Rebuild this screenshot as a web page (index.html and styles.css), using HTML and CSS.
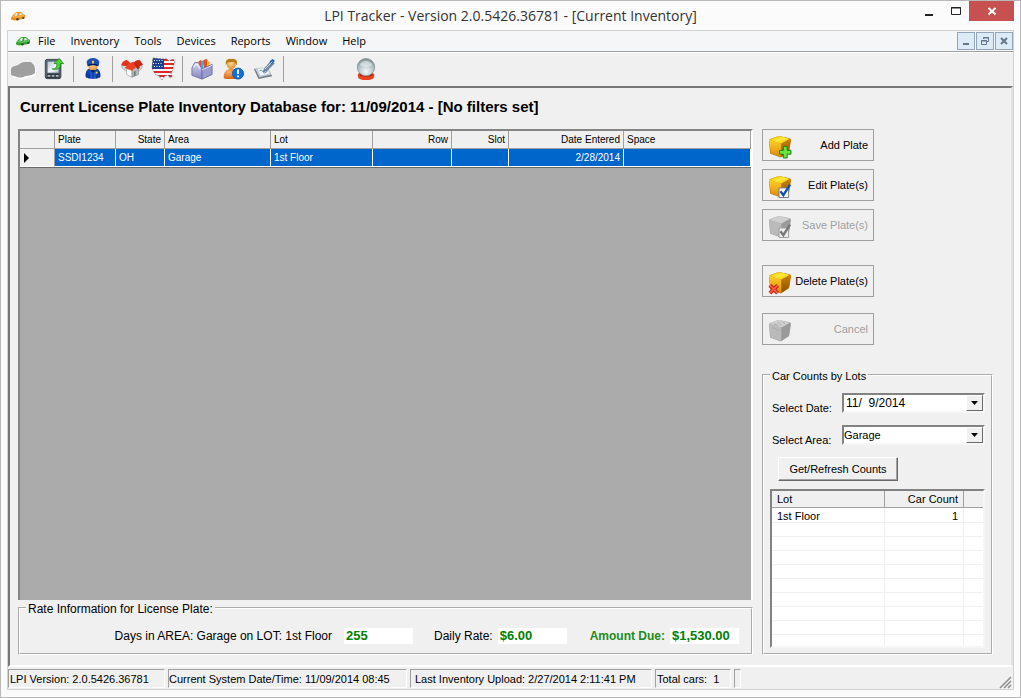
FILE: index.html
```html
<!DOCTYPE html>
<html lang="en">
<head>
<meta charset="utf-8">
<title>LPI Tracker</title>
<link rel="stylesheet" href="styles.css">
</head>
<body>
<svg class="defs" aria-hidden="true">
  <defs>
    <linearGradient id="goldTop" x1="0" y1="0" x2="1" y2="1"><stop offset="0" stop-color="#e8b400"/><stop offset=".5" stop-color="#ffe93a"/><stop offset="1" stop-color="#f0b800"/></linearGradient>
    <linearGradient id="goldLeft" x1="0" y1="0" x2="0" y2="1"><stop offset="0" stop-color="#ffd02a"/><stop offset="1" stop-color="#dd8a0a"/></linearGradient>
    <linearGradient id="goldRight" x1="0" y1="0" x2="0" y2="1"><stop offset="0" stop-color="#c98400"/><stop offset="1" stop-color="#8a4e00"/></linearGradient>
    <linearGradient id="navy" x1="0" y1="0" x2="1" y2="0"><stop offset="0" stop-color="#0a2f94"/><stop offset=".5" stop-color="#1f66dc"/><stop offset="1" stop-color="#0b2c8c"/></linearGradient>
    <linearGradient id="lilac" x1="0" y1="0" x2="0" y2="1"><stop offset="0" stop-color="#d4d6f2"/><stop offset="1" stop-color="#8484bc"/></linearGradient>
    <linearGradient id="screen" x1="0" y1="0" x2="1" y2="1"><stop offset="0" stop-color="#b8c8d8"/><stop offset=".6" stop-color="#f2f7fb"/><stop offset="1" stop-color="#a9bccc"/></linearGradient>
    <radialGradient id="skin" cx=".45" cy=".35" r=".7"><stop offset="0" stop-color="#ffd694"/><stop offset="1" stop-color="#dc8c2a"/></radialGradient>
    <radialGradient id="orange" cx=".35" cy=".3" r=".8"><stop offset="0" stop-color="#ffb368"/><stop offset="1" stop-color="#c8560a"/></radialGradient>
    <radialGradient id="glass" cx=".5" cy=".75" r=".75"><stop offset="0" stop-color="#f4f7f7"/><stop offset=".6" stop-color="#b4c2c4"/><stop offset="1" stop-color="#768688"/></radialGradient>
    <clipPath id="states"><path d="M2 1l9 1h5l2 2 4-2 2 3-2 4v4l-2 3 1 4-2 1-2-3-3 1-3 4-3-4-4-2-3-6z"/></clipPath>
    <symbol id="cube" viewBox="0 0 24 24">
      <path d="M1 6q0-2 2-2l8-3 11 2q2 0 2 3l-2 12-8 5q-1 1-2 0l-8-3q-2 0-2-3z" fill="#b87805"/>
      <path d="M1 5l10-4 12 3-9 5z" fill="url(#goldTop)"/>
      <path d="M1 5l13 4v14L3 19z" fill="url(#goldLeft)"/>
      <path d="M14 9l9-5-1 13-8 6z" fill="url(#goldRight)"/>
    </symbol>
    <symbol id="cube-off" viewBox="0 0 24 24">
      <path d="M1 6q0-2 2-2l8-3 11 2q2 0 2 3l-2 12-8 5q-1 1-2 0l-8-3q-2 0-2-3z" fill="#a4a4a4"/>
      <path d="M1 5l10-4 12 3-9 5z" fill="#cfcfcf"/>
      <path d="M1 5l13 4v14L3 19z" fill="#bababa"/>
      <path d="M14 9l9-5-1 13-8 6z" fill="#9a9a9a"/>
    </symbol>
    <symbol id="car" viewBox="0 0 16 10">
      <path d="M1 7l1-2 3-3q1-1 3-1h3l2 2 2 1v3l-2 1-5 1-4 .5-3-1z" fill="currentColor"/>
      <path d="M4 4.500l2-2.500h2L7 5zM9 4.500l.5-2.500H11l1.500 2z" fill="#dfe8e4"/>
      <path d="M2.500 5.500L7 6.200l7-1.700" fill="none" stroke="#fff" stroke-opacity=".45" stroke-width=".8"/>
      <circle cx="7.500" cy="8.200" r="1.300" fill="#444"/><circle cx="13.200" cy="7" r="1.100" fill="#444"/>
    </symbol>
  </defs>
</svg>

<div class="window">
  <header class="titlebar">
    <svg class="app-icon orange-car" viewBox="0 0 16 10"><use href="#car"/></svg>
    <h1 class="window-title">LPI Tracker - Version 2.0.5426.36781 - [Current Inventory]</h1>
    <div class="window-controls">
      <button class="win-btn" aria-label="Minimize"><svg viewBox="0 0 12 12"><path d="M2 10h8" stroke="#222" stroke-width="2"/></svg></button>
      <button class="win-btn" aria-label="Maximize"><svg viewBox="0 0 12 12"><path d="M1.500 2.500h9v7h-9zM1 3h10" fill="none" stroke="#222"/></svg></button>
      <button class="win-btn win-close" aria-label="Close"><svg viewBox="0 0 12 12"><path d="M2.500 3l7 6.500M9.500 3l-7 6.500" stroke="#fff" stroke-width="2"/></svg></button>
    </div>
  </header>

  <div class="client">
    <nav class="menubar">
      <svg class="menu-icon green-car" viewBox="0 0 16 10"><use href="#car"/></svg>
      <button class="menu">File</button>
      <button class="menu">Inventory</button>
      <button class="menu">Tools</button>
      <button class="menu">Devices</button>
      <button class="menu">Reports</button>
      <button class="menu">Window</button>
      <button class="menu">Help</button>
      <div class="child-controls">
        <button class="child-btn" aria-label="Minimize child"><svg viewBox="0 0 10 10"><path d="M2 8h6" stroke="#65758a" stroke-width="2"/></svg></button>
        <button class="child-btn" aria-label="Restore child"><svg viewBox="0 0 10 10"><path d="M3.500 3V1.500h5v4H7M3 2h6M1.500 4.500h5v4h-5zM1 5h6" fill="none" stroke="#65758a"/></svg></button>
        <button class="child-btn" aria-label="Close child"><svg viewBox="0 0 10 10"><path d="M2 2l6 6M8 2L2 8" stroke="#65758a" stroke-width="2"/></svg></button>
      </div>
    </nav>

    <div class="toolbar">
      <button class="tool tool-wide" aria-label="Vehicles" disabled><svg viewBox="0 0 24 24"><path d="M1 12l7-2 4-4h10l3 4v8l-3 2-6 1-5 1.500-8-2-2-2z" fill="#fff"/><path d="M0 12l1-2 6-2 3-2q2-1 4-1h6l3 3 1 3v5l-3 2-6 1-4 1.500H8l-7-2-1-1z" fill="#9f9f9f"/></svg></button>
      <button class="tool" aria-label="Sync device"><svg viewBox="0 0 24 24"><rect x="2.500" y="1.500" width="17" height="21" rx="2" fill="#596573" stroke="#394049"/><rect x="5" y="4" width="12" height="12" fill="url(#screen)"/><path d="M4 17h14v5H4z" fill="#32383f"/><path d="M5 19.500h3M9.500 19.500h3M14 19.500h3" stroke="#aeb7c0" stroke-width="2"/><path d="M10 12q6 0 5-6h-3l5.500-5.500L22.500 6H19q1 8-9 6z" fill="#4fd433" stroke="#178312" stroke-width=".8"/></svg></button>
      <span class="separator"></span>
      <button class="tool" aria-label="Officers"><svg viewBox="0 0 24 24"><path d="M4 21q-1-8 5-10h6q6 2 5 10-3 2-8 2t-8-2z" fill="url(#navy)"/><circle cx="12" cy="9" r="5" fill="url(#skin)"/><path d="M9 13h6l-3 4z" fill="#0b225f"/><path d="M5 4q2-4 7-4t7 4l-1 5q-6-2-12 0z" fill="#1c50b8"/><path d="M6.500 8q5.500-2 11 0" stroke="#061c60" stroke-width="1.500" fill="none"/><path d="M11 3h2v3h-2zM15 15h2v2h-2z" fill="#ffd32a"/><path d="M12 17v5M8 18v4M16 19v3" stroke="#082169"/></svg></button>
      <span class="separator"></span>
      <button class="tool" aria-label="Lots"><svg viewBox="0 0 24 24"><path d="M1 8h7v7l-3-1-4-3zM16 8h7v3l-3 3-4 1z" fill="#d4d8d8" stroke="#999f9f" stroke-width=".7"/><path d="M0 8l2-4 4-2 5 4-5 3z" fill="#e2341a"/><path d="M13 6l3-3 4-1 4 5-5 3z" fill="#cf260f"/><path d="M6 11h6v10l-6-3z" fill="#fafafa" stroke="#999f9f" stroke-width=".7"/><path d="M12 12l7-2v8l-7 3z" fill="#b4baba" stroke="#858c8c" stroke-width=".7"/><path d="M4 11l5-5 4-2 7 7-4-1-4 4z" fill="#ee4122"/><path d="M13 4l8 7-3 1z" fill="#b92009"/><path d="M14 15l2-1v5l-2 1z" fill="#727b7b"/></svg></button>
      <button class="tool tool-wide" aria-label="States"><svg viewBox="0 0 24 24"><g clip-path="url(#states)"><path d="M0 0h24v24H0z" fill="#fff"/><path d="M0 3h24M0 7h24M0 11h24M0 15h24M0 19h24" stroke="#e0272b" stroke-width="2"/><path d="M0 0h13v12H0z" fill="#173f91"/><path d="M3 3.500h9M2 6.500h10M3 9.500h9" stroke="#fff" stroke-dasharray="1 1.500"/></g><path d="M2 1l9 1h5l2 2 4-2 2 3-2 4v4l-2 3 1 4-2 1-2-3-3 1-3 4-3-4-4-2-3-6z" fill="none" stroke="#555" stroke-width=".6" stroke-dasharray="2 1"/></svg></button>
      <span class="separator"></span>
      <button class="tool" aria-label="Toolbox"><svg viewBox="0 0 24 24"><path d="M8 4l3-2v9H9zM13 3l3-2 2 1-1 10h-3z" fill="#ed4d20"/><path d="M11 3h2v9h-2z" fill="#32a6d8"/><path d="M18 3l3 2-3 7z" fill="#efb52a"/><path d="M1 11l3-6h4l4 7v11l-11-4z" fill="url(#lilac)" stroke="#7775ac"/><path d="M12 12l11-5v11l-11 5z" fill="#9b9bcf" stroke="#6c6aa4"/><path d="M3 10l2-3h2l3 5" fill="none" stroke="#eef" stroke-width="1.500"/><path d="M12 13l11-5" stroke="#ddddf8"/></svg></button>
      <button class="tool" aria-label="User alerts"><svg viewBox="0 0 24 24"><path d="M2 22q-1-8 6-10h4q5 1 6 5l-3 6H5z" fill="url(#orange)"/><circle cx="10" cy="7" r="5" fill="url(#skin)"/><path d="M4 8Q3 0 10 1q8-1 6 7l-3-4-7 1z" fill="#b77c11"/><circle cx="17.500" cy="17" r="6" fill="#1170df" stroke="#0758b3"/><path d="M17.500 12.500v5M17.500 19v2" stroke="#fff" stroke-width="2"/></svg></button>
      <button class="tool" aria-label="Write"><svg viewBox="0 0 24 24"><path d="M1 12l15-1 5 9-15 3z" fill="#75828e"/><path d="M2 11l14-1 4 8-13 3z" fill="#c4ccd3"/><path d="M5 12l10-1 3 6-10 2z" fill="#eef5fb"/><path d="M7 14q3-2 4 1t5-1" fill="none" stroke="#6388b1"/><path d="M11 15l2-4L20 3l3 3-8 8z" fill="#718ba6" stroke="#4b6078" stroke-width=".7"/><path d="M18 4l3-3 3 2-4 4z" fill="#2462af"/><path d="M13 12l8-8" stroke="#d9e6f3"/></svg></button>
      <span class="separator"></span>
      <button class="tool tool-status" aria-label="Connection"><svg viewBox="0 0 24 24"><path d="M3 19q0-4 9-4t9 4q0 5-9 5t-9-5z" fill="#e33617"/><ellipse cx="12" cy="18.500" rx="7" ry="2" fill="#a31908"/><circle cx="12" cy="10" r="9.500" fill="url(#glass)" stroke="#829092" stroke-width=".8"/><path d="M5 8q2-5 7-5t7 5q-7 3-14 0z" fill="#f4fbfb" opacity=".45"/><path d="M3 18q9 5 18 0-1 6-9 6t-9-6z" fill="#ea4220"/></svg></button>
    </div>

    <main class="workspace">
      <h2 class="heading">Current License Plate Inventory Database for: 11/09/2014 - [No filters set]</h2>
      <div class="columns">
        <section class="left">
          <div class="grid-box">
            <table class="grid">
              <colgroup><col class="c-head"><col class="c-plate"><col class="c-state"><col class="c-area"><col class="c-lot"><col class="c-row"><col class="c-slot"><col class="c-date"><col></colgroup>
              <thead><tr><th></th><th>Plate</th><th class="num">State</th><th>Area</th><th>Lot</th><th class="num">Row</th><th class="num">Slot</th><th class="num">Date Entered</th><th>Space</th></tr></thead>
              <tbody><tr><td class="row-head"><svg viewBox="0 0 5 10"><path d="M0 0l5 5-5 5z"/></svg></td><td>SSDI1234</td><td>OH</td><td>Garage</td><td>1st Floor</td><td></td><td></td><td class="num">2/28/2014</td><td></td></tr></tbody>
            </table>
          </div>
          <fieldset class="group rate">
            <legend>Rate Information for License Plate:</legend>
            <div class="rate-row">
              <label for="days">Days in AREA: Garage on LOT: 1st Floor</label><input class="value days" id="days" value="255" readonly>
              <label for="daily">Daily Rate:</label><input class="value daily" id="daily" value="$6.00" readonly>
              <label class="due" for="due">Amount Due:</label><input class="value" id="due" value="$1,530.00" readonly>
            </div>
          </fieldset>
        </section>

        <aside class="right">
          <div class="actions">
            <button class="action"><svg viewBox="0 0 24 24"><use href="#cube"/><path d="M16 12h4v4h4v4h-4v4h-4v-4h-4v-4h4z" fill="#6be33f" stroke="#15831a"/></svg>Add Plate</button>
            <button class="action"><svg viewBox="0 0 24 24"><use href="#cube"/><path d="M11.500 13.500h10v10h-10z" fill="#fff" stroke="#6d7888"/><path d="M13 17l3 4 7-11" fill="none" stroke="#1551bd" stroke-width="2.500"/></svg>Edit Plate(s)</button>
            <button class="action" disabled><svg viewBox="0 0 24 24"><use href="#cube-off"/><path d="M11.500 13.500h10v10h-10z" fill="#ededed" stroke="#999"/><path d="M13 17l3 4 7-11" fill="none" stroke="#777" stroke-width="2.500"/></svg>Save Plate(s)</button>
            <button class="action action-delete"><svg viewBox="0 0 24 24"><use href="#cube"/><path d="M2 15l8 8M10 15l-8 8" stroke="#b31d11" stroke-width="4"/><path d="M2 15l8 8M10 15l-8 8" stroke="#ff5a42" stroke-width="2"/></svg>Delete Plate(s)</button>
            <button class="action action-cancel" disabled><svg viewBox="0 0 24 24"><use href="#cube-off"/><path d="M6 5l5 2M10 3l4 4M15 3l3 2M5 9l7 3" stroke="#aaa"/></svg>Cancel</button>
          </div>
          <fieldset class="group counts">
            <legend>Car Counts by Lots</legend>
            <div class="field">
              <label for="date">Select Date:</label>
              <div class="combo"><input class="date" id="date" value="11/&nbsp; 9/2014"><button class="drop" aria-label="Open calendar"><svg viewBox="0 0 7 4"><path d="M0 0h7L3.500 4z"/></svg></button></div>
            </div>
            <div class="field">
              <label for="area">Select Area:</label>
              <div class="combo"><select id="area"><option>Garage</option></select><span class="drop drop-face"><svg viewBox="0 0 7 4"><path d="M0 0h7L3.500 4z"/></svg></span></div>
            </div>
            <button class="refresh">Get/Refresh Counts</button>
            <div class="list-box">
              <table class="list">
                <colgroup><col class="l-lot"><col class="l-count"><col></colgroup>
                <thead><tr><th>Lot</th><th class="num">Car Count</th><th></th></tr></thead>
                <tbody>
                  <tr><td>1st Floor</td><td class="num">1</td><td></td></tr>
                  <tr><td></td><td></td><td></td></tr><tr><td></td><td></td><td></td></tr><tr><td></td><td></td><td></td></tr>
                  <tr><td></td><td></td><td></td></tr><tr><td></td><td></td><td></td></tr><tr><td></td><td></td><td></td></tr>
                  <tr><td></td><td></td><td></td></tr><tr><td></td><td></td><td></td></tr><tr class="last"><td></td><td></td><td></td></tr>
                </tbody>
              </table>
            </div>
          </fieldset>
        </aside>
      </div>
    </main>

    <footer class="statusbar">
      <span class="panel p-version">LPI Version: 2.0.5426.36781</span>
      <span class="panel p-time">Current System Date/Time: 11/09/2014 08:45</span>
      <span class="panel p-upload">Last Inventory Upload: 2/27/2014 2:11:41 PM</span>
      <span class="panel p-cars">Total cars:&nbsp; 1</span>
      <span class="panel p-empty"></span>
      <svg class="grip" viewBox="0 0 12 12"><path d="M1 12L12 1M5 12l7-7M9 12l3-3" stroke="#8d8d8d" stroke-width="1.500"/></svg>
    </footer>
  </div>
</div>
</body>
</html>
```
FILE: styles.css
```css
* { box-sizing: border-box; }
body { margin: 0; font: 11px/14px "Liberation Sans", Arial, sans-serif; color: #000; background: #fbfbfb; }
button, input, select { font: inherit; color: inherit; margin: 0; padding: 0; border: 0; border-radius: 0; background: none; }
svg { display: block; overflow: visible; }
.defs { position: absolute; width: 0; height: 0; }

.window { display: flex; flex-direction: column; min-height: 100vh; padding: 0 6px 7px; border: 1px solid #b9b9b9; background: #fbfbfb; }

/* Title bar */
.titlebar { display: grid; grid-template-columns: 1fr auto 1fr; align-items: center; height: 29px; }
.app-icon { width: 16px; height: 10px; margin-left: 3px; }
.orange-car { color: #ee9418; }
.green-car { color: #32a62c; }
.window-title { margin: 0; font: 14px/28px "Open Sans", "Noto Sans", sans-serif; color: #333; }
.window-controls { display: flex; justify-content: flex-end; align-self: start; }
.win-btn { display: flex; align-items: center; justify-content: center; width: 27px; height: 20px; }
.win-btn svg { width: 12px; height: 12px; }
.win-close { width: 45px; background: #c75050; }

.client { display: flex; flex: 1; flex-direction: column; border: 1px solid #d2d2d2; background: #f0f0f0; }

/* Menu */
.menubar { display: flex; align-items: center; height: 21px; padding-left: 7px; background: #f5f6f8; border-bottom: 1px solid #a0a0a0; }
.menu-icon { width: 16px; height: 10px; margin-right: 7px; }
.menu { margin-right: 15px; font: 11px/18px "Open Sans", "Noto Sans", sans-serif; }
.child-controls { display: flex; gap: 1px; margin-left: auto; }
.child-btn { display: flex; align-items: center; justify-content: center; width: 18px; height: 18px; border: 1px solid #93a5b8; background: #ddebf8; }
.child-btn svg { width: 10px; height: 10px; }

/* Toolbar */
.toolbar { display: flex; align-items: center; gap: 7px; height: 34px; padding: 0 0 2px 3px; border-top: 1px solid #fff; }
.tool { width: 24px; height: 24px; }
.tool svg { width: 22px; height: 22px; margin: 0 auto; }
.tool-wide svg { width: 24px; height: 24px; }
.tool-status { margin-left: 63px; }
.separator { width: 1px; height: 26px; background: #a0a0a0; }

/* Workspace */
.workspace { display: flex; flex: 1; flex-direction: column; padding: 9px 18px 10px 8px; border: 2px solid; border-color: #777 #e3e3e3 #fff #777; }
.heading { margin: 0 0 12px 2px; font: bold 15px/20px "Liberation Sans", Arial, sans-serif; }
.columns { display: flex; flex: 1; gap: 9px; }
.left { display: flex; flex: 1; flex-direction: column; min-width: 0; }
.grid-box { flex: 1; border: 2px solid; border-color: #848484 #fff #f0f0f0 #848484; border-bottom: 0; background: #ababab; }
.grid { width: 100%; border-collapse: separate; border-spacing: 0; table-layout: fixed; font-size: 10px; line-height: 12px; border-bottom: 1px solid #696969; }
.c-head { width: 35px; } .c-plate { width: 61px; } .c-state { width: 49px; } .c-area { width: 106px; } .c-lot { width: 102px; }
.c-row { width: 79px; } .c-slot { width: 57px; } .c-date { width: 115px; }
.grid th, .grid td { height: 18px; padding: 0 3px; font-weight: normal; text-align: left; white-space: nowrap; }
.grid th { border-right: 1px solid #a0a0a0; border-bottom: 1px solid #a0a0a0; background: #f0f0f0; }
.grid td { border-right: 1px solid #fff; border-bottom: 1px solid #fff; background: #0066cc; color: #fff; }
.grid .row-head { background: #f0f0f0; border-right-color: #a0a0a0; }
.row-head svg { width: 5px; height: 10px; margin-left: 1px; }
.grid .num, .list .num { text-align: right; }

.group { min-width: 0; margin: 0; padding: 0; border: 2px groove #fff; }
.group legend { margin-left: 6px; padding: 0 2px; }
.rate { height: 55px; }
.rate legend { padding-top: 2px; font-size: 12px; line-height: 14px; }
.rate-row { display: flex; align-items: center; justify-content: flex-end; padding: 12px 12px 0 0; font-size: 12px; line-height: 16px; }
.value { width: 69px; height: 16px; margin-left: 12px; padding: 0 2px; background: #fff; color: #008000; font-size: 13px; font-weight: bold; }
.days { margin-right: 21px; }
.daily { margin-left: 5px; margin-right: 23px; }
.due { color: #228b22; font-weight: bold; }
.due + .value { margin-left: 5px; }

/* Actions */
.right { display: flex; flex-direction: column; width: 231px; }
.actions { display: flex; flex-direction: column; gap: 8px; width: 112px; }
.action { display: flex; align-items: center; justify-content: space-between; height: 32px; padding: 0 5px; border: 1px solid #a0a0a0; font-size: 11px; white-space: nowrap; }
.action svg { width: 23px; height: 23px; margin-top: 2px; }
.action:disabled { color: #a0a0a0; }
.action-delete { margin-top: 16px; }
.action-cancel { margin-top: 8px; }

/* Lot counts */
.counts { display: flex; flex: 1; flex-direction: column; margin-top: 22px; padding: 0 6px 5px; }
.counts legend { margin-left: 0; padding-top: 2px; }
.field { display: flex; align-items: center; justify-content: space-between; height: 20px; margin: 9px 0 3px 2px; }
.counts legend + .field { margin-top: 10px; }
.field label { padding-top: 9px; }
.combo { display: grid; width: 143px; height: 20px; border: 2px solid; border-color: #828282 #f6f6f6 #f6f6f6 #828282; background: #fff; }
.combo > input, .combo > select { grid-area: 1 / 1; width: 100%; min-width: 0; height: 16px; padding-left: 2px; appearance: none; font-size: 12px; }
.combo > select { padding-left: 0; font-size: 11px; }
.drop { display: flex; grid-area: 1 / 1; align-items: center; justify-content: center; justify-self: end; width: 17px; height: 16px; border: 1px solid; border-color: #fff #696969 #696969 #fff; background: #f0f0f0; }
.drop-face { pointer-events: none; }
.drop svg { width: 7px; height: 4px; }
.refresh { align-self: flex-start; width: 120px; height: 24px; margin: 9px 0 8px 8px; border: 1px solid; border-color: #fff #696969 #696969 #fff; box-shadow: inset -1px -1px #a0a0a0; }
.list-box { flex: 1; border: 2px solid; border-color: #828282 #f6f6f6 #f6f6f6 #828282; background: #fff; }
.list { width: 100%; border-collapse: separate; border-spacing: 0; table-layout: fixed; line-height: 12px; }
.l-lot { width: 113px; } .l-count { width: 79px; }
.list th { height: 17px; padding: 0 5px; border-right: 1px solid #a0a0a0; border-bottom: 1px solid #a0a0a0; background: #f0f0f0; font-weight: normal; text-align: left; }
.list td { height: 14px; padding: 0 5px; border-right: 1px solid #f0f0f0; border-bottom: 1px solid #f0f0f0; }
.list tbody tr:first-child td { height: 15px; padding-top: 2px; }
.list th:last-child, .list td:last-child { border-right: 0; }
.list .last td { height: 10px; border-bottom: 0; }

/* Status */
.statusbar { display: flex; align-items: stretch; gap: 3px; height: 22px; padding: 2px 2px 1px 0; }
.panel { padding: 2px 1px 0; border: 1px solid; border-color: #a0a0a0 #fff #fff #a0a0a0; white-space: nowrap; }
.p-version { width: 157px; } .p-time { width: 239px; padding-left: 0; } .p-upload { width: 242px; padding-left: 4px; } .p-cars { width: 76px; } .p-empty { width: 7px; }
.grip { align-self: flex-end; width: 12px; height: 12px; margin-left: auto; }
```
